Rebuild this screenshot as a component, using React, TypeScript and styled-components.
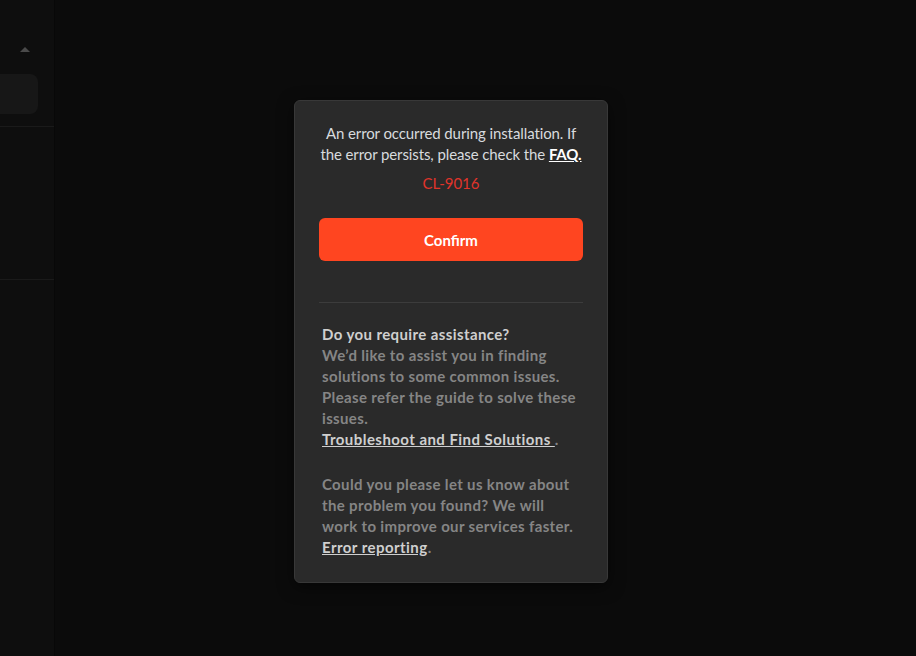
import React from "react"
import styled, { createGlobalStyle } from "styled-components"

const GlobalStyle = createGlobalStyle`
    html, body {
        margin: 0;
        padding: 0;
        background: #0b0b0b;
    }
    body {
        font-family: 'Lato', 'Noto Sans', sans-serif;
    }
`

const PageStyled = styled.div`
    position: relative;
    width: 916px;
    height: 656px;
    overflow: hidden;
    display: flex;
    background: #0b0b0b;
`

const Sidebar = styled.aside`
    width: 54px;
    flex-shrink: 0;
    background: #0e0e0e;
    border-right: 1px solid #080808;
    display: flex;
    flex-direction: column;
`

const SidebarHeader = styled.div`
    height: 74px;
    display: flex;
    justify-content: flex-end;
    padding: 0 24px 0 0;
    box-sizing: border-box;

    .caret {
        margin-top: 47px;
        width: 0;
        height: 0;
        border-left: 5px solid transparent;
        border-right: 5px solid transparent;
        border-bottom: 5px solid #4a4a4a;
    }
`

const SidebarItem = styled.div`
    height: 40px;
    width: 52px;
    margin-left: -14px;
    border-radius: 8px;
    background: #171717;
`

const SidebarSection = styled.div<{ height: number }>`
    height: ${p => p.height}px;
    border-bottom: 1px solid #1a1a1a;
    box-sizing: border-box;
`

const Main = styled.main`
    flex: 1;
`

const Overlay = styled.div`
    position: absolute;
    inset: 0;
    display: flex;
    justify-content: center;
    align-items: flex-start;
    padding: 100px 14px 0 0;
    box-sizing: border-box;
`

const ModalStyled = styled.div`
    width: 314px;
    box-sizing: border-box;
    background: #2a2a2a;
    border: 1px solid #383838;
    border-radius: 6px;
    padding: 22px 24px 24px 24px;
    box-shadow: 0 4px 16px rgba(0, 0, 0, 0.5);

    .message {
        text-align: center;
        color: #d8dbde;
        font-size: 15px;
        line-height: 21px;
        letter-spacing: -0.1px;

        a {
            color: #ffffff;
            font-weight: 700;
            text-decoration: underline;
        }
    }

    .code {
        margin-top: 8px;
        text-align: center;
        color: #e0342a;
        font-size: 15px;
        line-height: 21px;
    }
`

const ConfirmButton = styled.button`
    display: block;
    width: 100%;
    height: 43px;
    margin-top: 24px;
    border: none;
    border-radius: 6px;
    background: #ff4520;
    color: #ffffff;
    font-family: 'Lato', 'Noto Sans', sans-serif;
    font-size: 15px;
    font-weight: 700;
    cursor: pointer;
`

const Divider = styled.hr`
    margin: 41px 0 0 0;
    border: none;
    border-top: 1px solid #3c3c3c;
`

const HelpStyled = styled.div`
    margin-top: 21px;
    padding: 0 0 0 3px;
    font-size: 15px;
    line-height: 21px;
    font-weight: 700;
    letter-spacing: 0.35px;
    white-space: nowrap;
    color: #858585;

    .title {
        color: #cfcfcf;
        letter-spacing: 0.4px;
    }

    a {
        color: #cfcfcf;
        text-decoration: underline;
        letter-spacing: 0.45px;
    }

    p {
        margin: 0;
    }

    p + p {
        margin-top: 24px;
    }
`

const Modal: React.FC = () => {
    return <ModalStyled>
        <div className="message">
            An error occurred during installation. If the error persists, please check the <a href="#">FAQ.</a>
        </div>
        <div className="code">CL-9016</div>
        <ConfirmButton>Confirm</ConfirmButton>
        <Divider />
        <HelpStyled>
            <p>
                <span className="title">Do you require assistance?</span><br />
                We’d like to assist you in finding<br />
                solutions to some common issues.<br />
                Please refer the guide to solve these<br />
                issues.<br />
                <a href="#">Troubleshoot and Find Solutions </a>.
            </p>
            <p>
                Could you please let us know about<br />
                the problem you found? We will<br />
                work to improve our services faster.<br />
                <a href="#">Error reporting</a>.
            </p>
        </HelpStyled>
    </ModalStyled>
}

const App: React.FC = () => {
    return <>
        <GlobalStyle />
        <PageStyled>
            <Sidebar>
                <SidebarHeader><div className="caret" /></SidebarHeader>
                <SidebarSection height={53}><SidebarItem /></SidebarSection>
                <SidebarSection height={153} />
            </Sidebar>
            <Main />
            <Overlay>
                <Modal />
            </Overlay>
        </PageStyled>
    </>
}

export default App
